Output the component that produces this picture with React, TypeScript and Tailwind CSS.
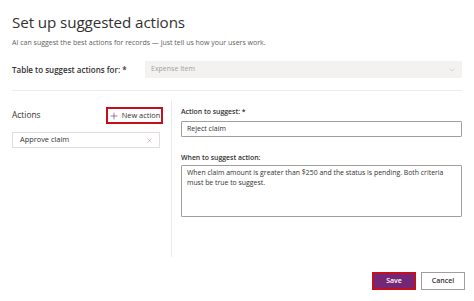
import { ChevronDown, Plus, X } from 'lucide-react';

export default function App() {
  return (
    <div className="w-[474px] h-[301px] bg-white px-3 font-['Open_Sans',sans-serif] text-[#323130] flex flex-col overflow-hidden">
      <h1 className="pt-3 text-[15.2px] leading-[20px] font-normal tracking-[-0.1px]">Set up suggested actions</h1>
      <p className="mt-[6px] text-[7px] leading-[10px] text-[#605e5c]">
        AI can suggest the best actions for records — just tell us how your users work.
      </p>

      <div className="mt-[13px] flex items-center">
        <label className="w-[133px] text-[8px] font-semibold">Table to suggest actions for: *</label>
        <div className="flex-1 h-[17px] bg-[#f3f2f1] flex items-center justify-between pl-[6px] pr-[6px]">
          <span className="text-[7px] text-[#a19f9d]">Expense Item</span>
          <ChevronDown className="w-[8px] h-[8px] text-[#c8c6c4]" />
        </div>
      </div>

      <div className="mt-3 border-t border-[#edebe9]" />

      <div className="mt-[9px] flex h-[157px]">
        <div className="w-[160px] pr-[11px] pt-[7px] border-r border-[#edebe9]">
          <div className="flex items-center justify-between h-[17px]">
            <span className="text-[8.4px] font-medium">Actions</span>
            <button className="h-[17px] w-[57px] -mr-[3px] border-2 border-[#c50f1f] flex items-center justify-center gap-[3px]">
              <Plus className="w-[10px] h-[10px] text-[#742774]" strokeWidth={1.5} />
              <span className="text-[7.4px] text-[#323130]">New action</span>
            </button>
          </div>
          <div className="mt-[8px] h-[16px] border border-[#e1dfdd] flex items-center justify-between pl-[7px] pr-[6px]">
            <span className="text-[7.4px]">Approve claim</span>
            <X className="w-[7px] h-[7px] text-[#b0728a]" strokeWidth={1.5} />
          </div>
        </div>

        <div className="flex-1 pl-[9px] pt-[7px]">
          <label className="block text-[6.9px] leading-[10px] font-semibold">Action to suggest: *</label>
          <div className="mt-[4px] h-[16px] border border-[#a19f9d] rounded-[1px] flex items-center pl-[5px]">
            <span className="text-[7px]">Reject claim</span>
          </div>
          <label className="block mt-[16px] text-[6.9px] leading-[10px] font-semibold">When to suggest action:</label>
          <div className="mt-[2px] h-[52px] border border-[#a19f9d] rounded-[1px] px-[5px] pt-[2px]">
            <p className="text-[6.9px] leading-[10px]">
              When claim amount is greater than $250 and the status is pending. Both criteria must be true to suggest.
            </p>
          </div>
        </div>
      </div>

      <div className="mt-[15px] -mr-[3px] flex justify-end gap-[5px]">
        <button className="w-[44px] h-[18px] bg-[#742774] border-2 border-[#c50f1f] text-white text-[7px] font-semibold flex items-center justify-center">
          Save
        </button>
        <button className="w-[44px] h-[18px] bg-white border border-[#a19f9d] text-[7px] font-semibold flex items-center justify-center">
          Cancel
        </button>
      </div>
    </div>
  );
}
